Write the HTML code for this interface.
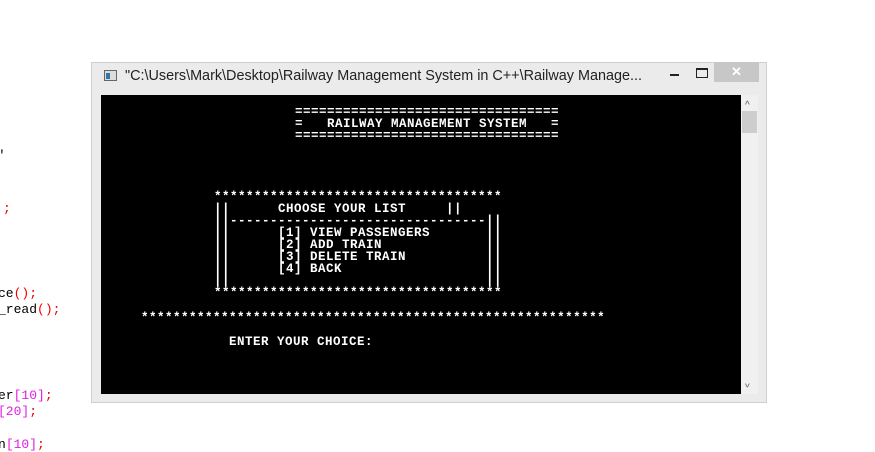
<!DOCTYPE html>
<html><head><style>
body{margin:0;width:875px;height:448px;background:#fff;position:relative;overflow:hidden;font-family:"Liberation Sans",sans-serif}
.code{position:absolute;font-family:"Liberation Mono",monospace;font-size:13px;color:#000;white-space:pre}
.r{color:#e00}.m{color:#e020e0}
#win{position:absolute;left:91px;top:62px;width:676px;height:341px;background:#ebebeb;border:1px solid #cfcfcf;box-sizing:border-box}
#title{position:absolute;left:125px;top:68px;font-size:14.4px;color:#222;white-space:nowrap}
#icon{position:absolute;left:104px;top:70px;width:13px;height:11px;border:1px solid #666;background:#ddd;box-sizing:border-box}
#icon:before{content:"";position:absolute;left:1px;top:2px;width:4px;height:6px;background:#37a}
#close{position:absolute;left:714px;top:62px;width:45px;height:20px;background:#c7c7c7;color:#fff;text-align:center;font-size:13px;line-height:20px;font-weight:bold}
#min{position:absolute;left:670px;top:74px;width:9px;height:2px;background:#222}
#max{position:absolute;left:696px;top:68px;width:10px;height:7px;border:1px solid #222;border-top-width:2px}
#con{position:absolute;left:101px;top:95px;width:640px;height:299px;background:#000}
#sb{position:absolute;left:741px;top:95px;width:17px;height:299px;background:#f0f0f0}
#thumb{position:absolute;left:742px;top:111px;width:15px;height:22px;background:#cdcdcd}
.t{position:absolute;font-family:"Liberation Mono",monospace;font-weight:bold;font-size:12.5px;letter-spacing:0.5px;color:#fff;white-space:pre;line-height:12px}
</style></head><body>
<div class="code" style="left:-2px;top:148px">'</div>
<div class="code r" style="left:3px;top:201px">;</div>
<div class="code" style="left:-2px;top:286px">ce<span class="r">();</span></div>
<div class="code" style="left:-2px;top:302px">_read<span class="r">();</span></div>
<div class="code" style="left:-2px;top:388px">er<span class="m">[10]</span><span class="r">;</span></div>
<div class="code" style="left:-2px;top:404px"><span class="m">[20]</span><span class="r">;</span></div>
<div class="code" style="left:-2px;top:437px">n<span class="m">[10]</span><span class="r">;</span></div>
<div id="win"></div>
<div id="icon"></div>
<div id="title">"C:\Users\Mark\Desktop\Railway Management System in C++\Railway Manage...</div>
<div id="min"></div><div id="max"></div>
<div id="close">✕</div>
<div id="con"></div>
<div id="sb"><div style="position:absolute;left:4px;top:5px;font-size:10px;color:#555">^</div><div style="position:absolute;left:4px;top:282px;font-size:10px;color:#555;transform:scaleY(-1)">^</div></div>
<div id="thumb"></div>
<div class="t" style="left:295px;top:106px">=================================
=   RAILWAY MANAGEMENT SYSTEM   =
=================================</div>
<div class="t" style="left:214px;top:191px">************************************
||      CHOOSE YOUR LIST     ||
||--------------------------------||
||      [1] VIEW PASSENGERS       ||
||      [2] ADD TRAIN             ||
||      [3] DELETE TRAIN          ||
||      [4] BACK                  ||
||                                ||
************************************</div>
<div class="t" style="left:141px;top:312px">**********************************************************</div>
<div class="t" style="left:229px;top:336px">ENTER YOUR CHOICE:</div>
</body></html>
